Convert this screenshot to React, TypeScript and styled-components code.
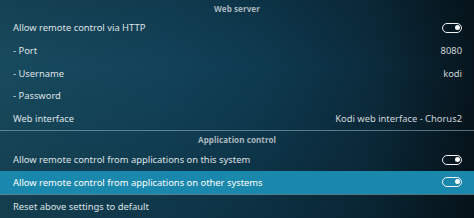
import { createGlobalStyle } from 'styled-components';
import styled from 'styled-components';

const GlobalStyle = createGlobalStyle`
  html, body {
    margin: 0;
    padding: 0;
    background: #06141b;
  }
`;

const Screen = styled.div`
  width: 474px;
  height: 218px;
  overflow: hidden;
  display: flex;
  flex-direction: column;
  font-family: 'Noto Sans', 'Open Sans', sans-serif;
  background:
    linear-gradient(180deg, rgba(0, 0, 0, 0.12) 0%, rgba(0, 0, 0, 0) 30%, rgba(0, 0, 0, 0.18) 100%),
    linear-gradient(90deg, #184a5e 0%, #124259 35%, #0e3a50 55%, #0b2c3d 78%, #06151d 100%);
`;

const GroupHeader = styled.div<{ $height: number }>`
  height: ${(p) => p.$height}px;
  display: flex;
  align-items: center;
  justify-content: center;
  font-size: 8.1px;
  font-weight: 700;
  color: #a9b6bd;
  letter-spacing: 0.05px;
`;

const Row = styled.div<{ $active?: boolean }>`
  height: 22.7px;
  flex-shrink: 0;
  display: flex;
  align-items: center;
  justify-content: space-between;
  padding: 0 12px 0 13px;
  font-size: 9.4px;
  color: ${(p) => (p.$active ? '#ffffff' : '#dde3e6')};
  background: ${(p) => (p.$active ? '#1a87ad' : 'transparent')};
`;

const Value = styled.span`
  color: #cfd6da;
`;

const Separator = styled.div`
  height: 1px;
  flex-shrink: 0;
  background: rgba(150, 185, 200, 0.55);
`;

const Toggle = styled.span`
  position: relative;
  width: 20px;
  height: 10px;
  box-sizing: border-box;
  border: 1.5px solid #f2f4f5;
  border-radius: 6px;

  &::after {
    content: '';
    position: absolute;
    top: 1px;
    right: 1px;
    width: 5px;
    height: 5px;
    border-radius: 50%;
    background: #ffffff;
  }
`;

const App = () => (
  <>
    <GlobalStyle />
    <Screen>
      <GroupHeader $height={16.5}>Web server</GroupHeader>
      <Row>
        <span>Allow remote control via HTTP</span>
        <Toggle />
      </Row>
      <Row>
        <span>- Port</span>
        <Value>8080</Value>
      </Row>
      <Row>
        <span>- Username</span>
        <Value>kodi</Value>
      </Row>
      <Row>
        <span>- Password</span>
      </Row>
      <Row>
        <span>Web interface</span>
        <Value>Kodi web interface - Chorus2</Value>
      </Row>
      <Separator />
      <GroupHeader $height={17.5}>Application control</GroupHeader>
      <Row>
        <span>Allow remote control from applications on this system</span>
        <Toggle />
      </Row>
      <Row $active>
        <span>Allow remote control from applications on other systems</span>
        <Toggle />
      </Row>
      <Separator />
      <Row>
        <span>Reset above settings to default</span>
      </Row>
    </Screen>
  </>
);

export default App;
